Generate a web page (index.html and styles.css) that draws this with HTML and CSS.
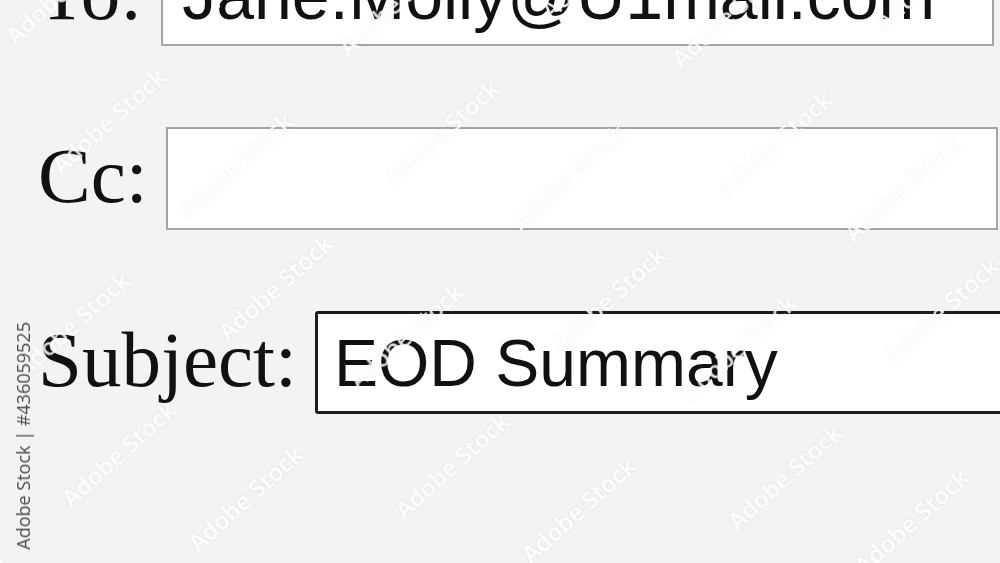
FILE: index.html
```html
<!DOCTYPE html>
<html lang="en">
<head>
<meta charset="utf-8">
<title>Compose email</title>
<link rel="stylesheet" href="styles.css">
</head>
<body>
<main class="form">
  <div class="row">
    <label class="label" for="to">To:</label>
    <input id="to" class="field field-to" type="text" value="Jane.Molly@U1mail.com">
  </div>
  <div class="row">
    <label class="label" for="cc">Cc:</label>
    <input id="cc" class="field field-cc" type="text" value="">
  </div>
  <div class="row">
    <label class="label" for="subject">Subject:</label>
    <input id="subject" class="field field-subject" type="text" value="EOD Summary">
  </div>
</main>

<svg class="watermarks" width="1000" height="563" viewBox="0 0 1000 563" aria-hidden="true">
  <defs>
    <filter id="wm-shadow" x="-20%" y="-20%" width="140%" height="140%">
      <feDropShadow dx="0" dy="0" stdDeviation="1.6" flood-color="#000" flood-opacity="0.09"/>
    </filter>
    <g id="wm-cell" class="wm-cell">
      <text transform="translate(108 120) rotate(-42)">Adobe Stock</text>
      <text transform="translate(235 165) rotate(-42)">Adobe Stock</text>
      <text transform="translate(275 287) rotate(-42)">Adobe Stock</text>
      <text transform="translate(405 335) rotate(-42)">Adobe Stock</text>
    </g>
  </defs>
  <g filter="url(#wm-shadow)">
    <use href="#wm-cell" x="-343" y="-344.5"/>
    <use href="#wm-cell" x="-333" y="-11.5"/>
    <use href="#wm-cell" x="-323" y="321.5"/>
    <use href="#wm-cell" x="-10" y="-333"/>
    <use href="#wm-cell" x="0" y="0"/>
    <use href="#wm-cell" x="10" y="333"/>
    <use href="#wm-cell" x="323" y="-321.5"/>
    <use href="#wm-cell" x="333" y="11.5"/>
    <use href="#wm-cell" x="343" y="344.5"/>
    <use href="#wm-cell" x="656" y="-310"/>
    <use href="#wm-cell" x="666" y="23"/>
    <use href="#wm-cell" x="676" y="356"/>
  </g>
</svg>

<div class="credit">Adobe Stock | #436059525</div>
</body>
</html>
```

FILE: styles.css
```css
html, body {
  margin: 0;
  padding: 0;
}

body {
  position: relative;
  width: 1000px;
  height: 563px;
  overflow: hidden;
  background: #f3f3f3;
}

.form {
  display: flex;
  flex-direction: column;
  gap: 81px;
  margin-top: -57px;
  padding-left: 38px;
}

.row {
  display: flex;
  align-items: baseline;
  gap: 18px;
}

.label {
  font-family: "Liberation Serif", "Times New Roman", serif;
  font-size: 79px;
  color: #111;
  white-space: nowrap;
}

.field {
  box-sizing: border-box;
  height: 103px;
  margin: 0;
  padding: 0 16px;
  background: #fff;
  border: 2px solid #a4a4a4;
  border-radius: 0;
  font-family: "Liberation Sans", Arial, sans-serif;
  color: #111;
  outline: none;
  flex: none;
}

.field-to {
  width: 833px;
  margin-left: 1px;
  padding-left: 19px;
  font-size: 68px;
}

.field-cc {
  width: 832px;
  font-size: 66px;
}

.field-subject {
  width: 720px;
  font-size: 66px;
  border: 3px solid #1c1c1c;
  border-radius: 3px;
}

.watermarks {
  position: absolute;
  left: 0;
  top: 0;
  pointer-events: none;
}

.wm-cell text {
  font-family: "Open Sans", "DejaVu Sans", sans-serif;
  font-weight: 600;
  font-size: 24px;
  fill: #ffffff;
  fill-opacity: 0.85;
  text-anchor: middle;
  dominant-baseline: central;
}

.credit {
  position: absolute;
  left: 13px;
  top: 322px;
  writing-mode: vertical-rl;
  transform: rotate(180deg);
  font-family: "Open Sans", "DejaVu Sans", sans-serif;
  font-size: 18px;
  line-height: 20px;
  color: #4a4a4a;
  white-space: nowrap;
}
```
